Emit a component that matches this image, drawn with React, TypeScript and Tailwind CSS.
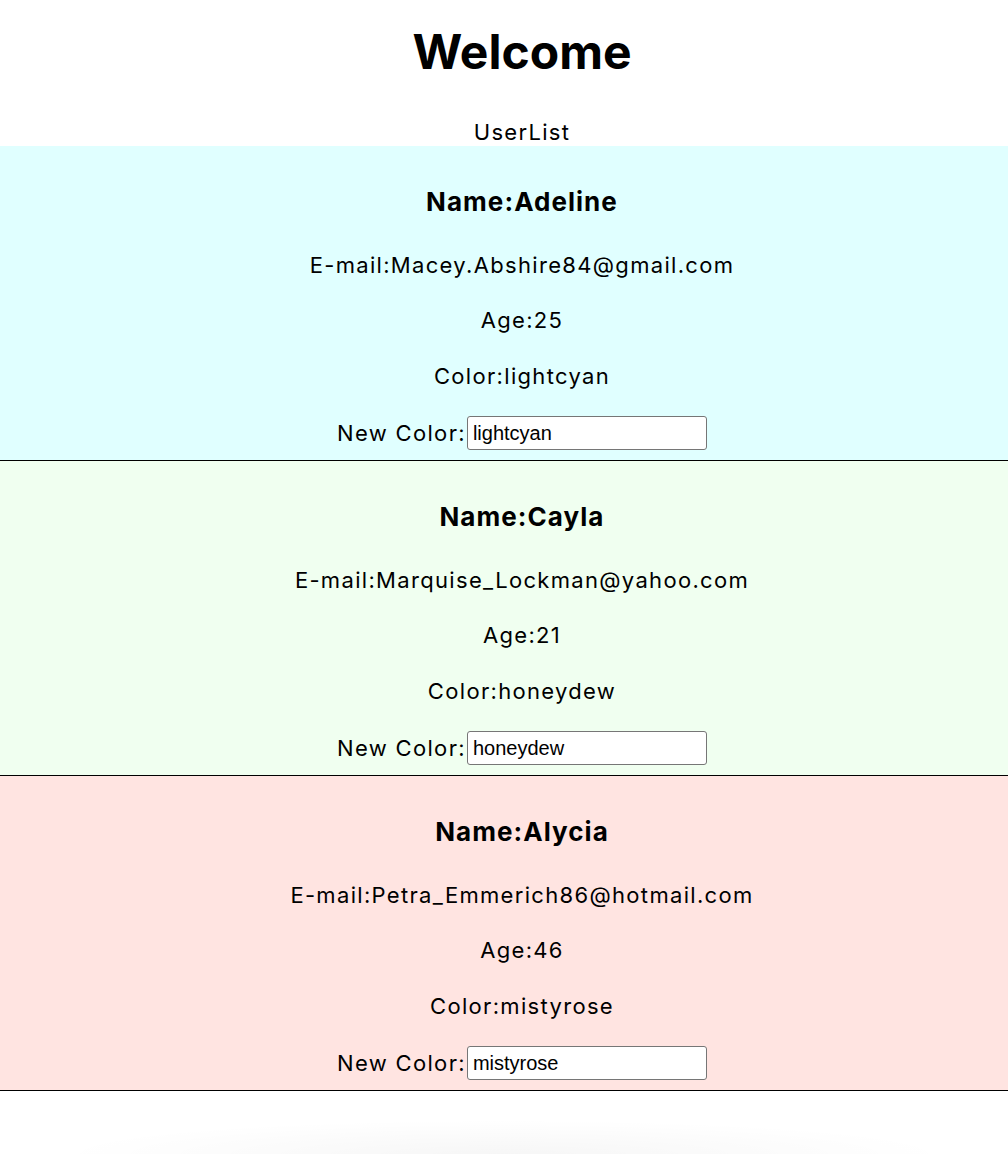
import React, { useState } from 'react';

interface User {
  name: string;
  email: string;
  age: number;
  color: string;
}

const initialUsers: User[] = [
  { name: 'Adeline', email: 'Macey.Abshire84@gmail.com', age: 25, color: 'lightcyan' },
  { name: 'Cayla', email: 'Marquise_Lockman@yahoo.com', age: 21, color: 'honeydew' },
  { name: 'Alycia', email: 'Petra_Emmerich86@hotmail.com', age: 46, color: 'mistyrose' },
];

// background classes keyed by color name, written out in full for tailwind
const bgByColor: Record<string, string> = {
  lightcyan: 'bg-[#e0ffff]',
  honeydew: 'bg-[#f0fff0]',
  mistyrose: 'bg-[#ffe4e1]',
};

const UserCard: React.FC<{ user: User; onColorChange: (c: string) => void }> = ({ user, onColorChange }) => {
  return (
    <div className={`${bgByColor[user.color] || 'bg-white'} border-b border-black pt-[42px] pb-[10px]`}>
      <div className="flex flex-col items-center pl-[36px] text-[22px] leading-[28px] tracking-[0.06em] text-black">
        <h3 className="h-[28px] text-[26px] font-bold tracking-[0.04em]">Name:{user.name}</h3>
        <p className="mt-[35px] h-[28px]">E-mail:{user.email}</p>
        <p className="mt-[27px] h-[28px]">Age:{user.age}</p>
        <p className="mt-[28px] h-[28px]">Color:{user.color}</p>
        <div className="mt-[26px] flex h-[34px] items-center">
          <span>New Color:</span>
          <input
            className="ml-px h-[34px] w-[240px] rounded-[3px] border border-[#767676] bg-white px-[5px] text-[20px] tracking-normal font-['Liberation_Sans',Arial,sans-serif] text-black outline-none"
            value={user.color}
            onChange={e => onColorChange(e.target.value)}
          />
        </div>
      </div>
    </div>
  );
};

const App: React.FC = () => {
  const [users, setUsers] = useState<User[]>(initialUsers);

  const updateColor = (idx: number, color: string) => {
    setUsers(prev => prev.map((u, i) => (i === idx ? { ...u, color } : u)));
  };

  return (
    <div className="min-h-[1154px] bg-white font-['Inter','Liberation_Sans',sans-serif] text-black">
      <div className="flex flex-col items-center pl-[36px] pt-[22px]">
        <h1 className="h-[60px] text-[48px] font-bold leading-[60px]">Welcome</h1>
        <div className="mt-[36px] h-[28px] text-[22px] leading-[28px] tracking-[0.06em]">UserList</div>
      </div>
      {users.map((u, i) => (
        <UserCard key={u.name} user={u} onColorChange={c => updateColor(i, c)} />
      ))}
      <div className="mx-[50px] mt-[28px] h-[36px] bg-[radial-gradient(ellipse_at_bottom,rgba(0,0,0,0.035),transparent_70%)]" />
    </div>
  );
};

export default App;
